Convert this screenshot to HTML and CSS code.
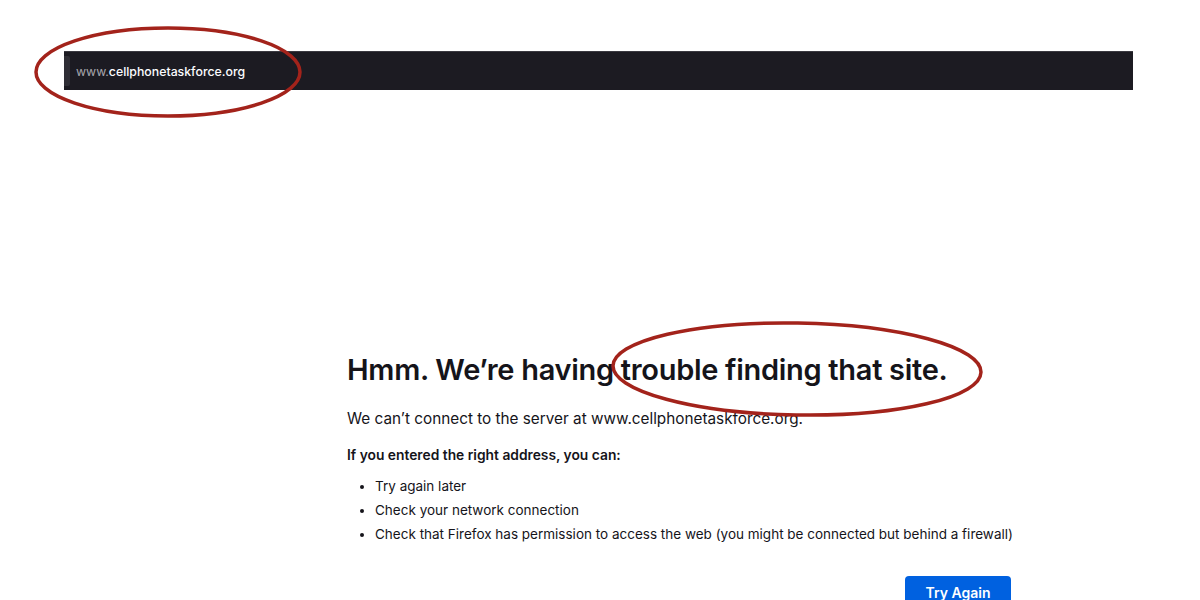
FILE: index.html
```html
<!DOCTYPE html>
<html lang="en">
<head>
    <meta charset="UTF-8">
    <title>Server Not Found</title>
    <link rel="stylesheet" href="styles.css">
</head>
<body>
    <div class="urlbar">
        <span class="urlbar-edge"></span>
        <span class="url"><span class="url-prefix">www.</span>cellphonetaskforce.org</span>
    </div>

    <main class="error">
        <h1>Hmm. We’re having trouble finding that site.</h1>
        <p class="lead">We can’t connect to the server at www.cellphonetaskforce.org.</p>
        <p class="hint">If you entered the right address, you can:</p>
        <ul class="tips">
            <li>Try again later</li>
            <li>Check your network connection</li>
            <li>Check that Firefox has permission to access the web (you might be connected but behind a firewall)</li>
        </ul>
        <div class="actions">
            <button class="retry">Try Again</button>
        </div>
    </main>

    <!-- hand-drawn red circles over the screenshot -->
    <svg class="marks" width="1200" height="600" viewBox="0 0 1200 600">
        <ellipse cx="168" cy="72" rx="132" ry="44" />
        <ellipse cx="797" cy="369" rx="184" ry="46" transform="rotate(1 797 369)" />
    </svg>
</body>
</html>
```

FILE: styles.css
```css
body {
    margin: 0;
    background: #fff;
    font-family: Inter, "Noto Sans", sans-serif;
    color: #15141a;
    position: relative;
    height: 600px;
    overflow: hidden;
}
.urlbar {
    margin: 51px 67px 0 64px;
    height: 39px;
    background: #1c1b22;
    border-top: 1px solid #3a3940;
    box-sizing: border-box;
    display: flex;
    align-items: center;
}
.urlbar-edge {
    width: 6px;
    height: 30px;
    background: #2f2e35;
    border-radius: 0 2px 2px 0;
}
.url {
    margin-left: 6px;
    font-size: 12.3px;
    color: #fbfbfe;
    font-weight: 500;
}
.url-prefix {
    color: #a7a6ad;
    font-weight: 400;
}
.error {
    margin: 262px 0 0 347px;
    width: 700px;
}
h1 {
    font-size: 29px;
    font-weight: 600;
    letter-spacing: -0.3px;
    margin: 0;
    line-height: 36px;
}
.lead {
    font-size: 15.3px;
    margin: 20px 0 0;
    line-height: 22px;
}
.hint {
    font-size: 13.8px;
    font-weight: 600;
    margin: 15px 0 0;
    line-height: 20px;
}
.tips {
    font-size: 13.5px;
    margin: 9px 0 0;
    padding-left: 28px;
    line-height: 24px;
    white-space: nowrap;
}
.actions {
    display: flex;
    margin-top: 30px;
    padding-left: 558px;
}
.retry {
    background: #0061e0;
    color: #fff;
    border: none;
    border-radius: 4px;
    font-family: inherit;
    font-size: 14px;
    font-weight: 600;
    width: 106px;
    height: 32px;
}
.marks {
    position: absolute;
    top: 0;
    left: 0;
    pointer-events: none;
}
.marks ellipse {
    fill: none;
    stroke: #a3231b;
    stroke-width: 3.5;
}
```
